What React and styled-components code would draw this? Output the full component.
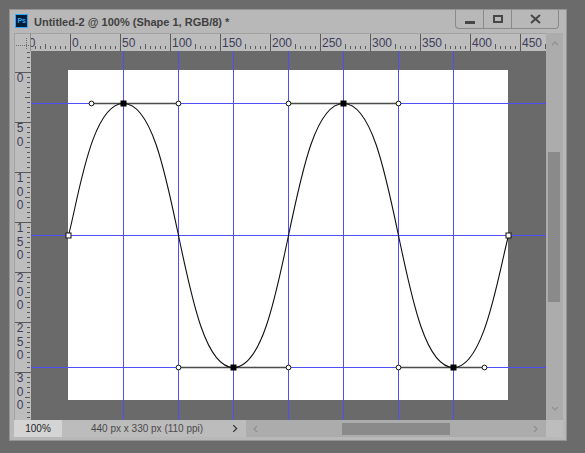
import React from 'react';
import styled, { createGlobalStyle } from 'styled-components';

const GlobalStyle = createGlobalStyle`
  html, body {
    margin: 0;
    padding: 0;
    background: #6b6b6b;
  }
  body {
    width: 585px;
    height: 453px;
    overflow: hidden;
    font-family: "Liberation Sans", Arial, sans-serif;
  }
`;

const GUIDE = '#4f4ff8';
const RULER_INK = '#5a5a5a';
const RULER_TEXT = '#3e3e5c';

// guides, in document px
const GUIDE_X = [55, 110, 165, 220, 275, 330, 385];
const GUIDE_Y = [33, 165, 297];

const CURVE =
  'M0 165 C10 127 23 33 55 33 C110 33 110 297 165 297 C220 297 220 33 275 33 C330 33 330 297 385 297 C416 297 430 203 440 165';

const ANCHORS = [
  { x: 55, y: 33, from: 23, to: 110 },
  { x: 165, y: 297, from: 110, to: 220 },
  { x: 275, y: 33, from: 220, to: 330 },
  { x: 385, y: 297, from: 330, to: 416 },
];

// horizontal ruler: zero sits 39px into the strip
const H_ZERO = 39;
const hTicks = [];
for (let m = -7; H_ZERO + m * 5 < 515; m++) {
  const base = Math.floor(m / 10) * 10;
  const offset = (m - base) * 5;
  const labelW = base >= 0 ? String(base * 5).length * 6.7 + 3 : 0;
  const kind = m % 10 === 0 ? 'major' : Math.abs(m % 10) === 5 ? 'mid' : 'minor';
  if (kind !== 'major' && offset < labelW) continue;
  hTicks.push({ x: H_ZERO + m * 5, kind });
}
const hLabels = [{ x: -9, text: '50' }];
for (let k = 0; k <= 9; k++) hLabels.push({ x: H_ZERO + k * 50 + 2, text: String(k * 50) });

// vertical ruler: zero sits 21px into the strip
const V_ZERO = 21;
const vTicks = [];
for (let m = -4; V_ZERO + m * 5 < 369; m++) {
  const kind = m % 10 === 0 ? 'major' : Math.abs(m % 10) === 5 ? 'mid' : 'minor';
  vTicks.push({ y: V_ZERO + m * 5, kind });
}
const vLabels = [0, 50, 100, 150, 200, 250, 300];

const Page = styled.div`
  padding: 9px 0 0 9px;
`;

const Window = styled.div`
  box-sizing: border-box;
  width: 558px;
  height: 432px;
  display: flex;
  flex-direction: column;
  padding: 0 3px 3px 4px;
  background: #b8b8b8;
  border: 1px solid #949494;
`;

const TitleBar = styled.div`
  height: 23px;
  flex-shrink: 0;
  display: flex;
  align-items: flex-start;
`;

const AppIcon = styled.span`
  box-sizing: border-box;
  width: 13px;
  height: 14px;
  margin: 4px 6px 0 1px;
  background: #001e36;
  border: 1px solid #31a8ff;
  color: #31a8ff;
  font: bold 7px/12px "Liberation Sans", Arial, sans-serif;
  text-align: center;
  letter-spacing: -0.3px;
`;

const Title = styled.span`
  margin-top: 6px;
  font-size: 11px;
  line-height: 13px;
  font-weight: 700;
  color: #414141;
  white-space: nowrap;
`;

const WindowButtons = styled.div`
  margin-left: auto;
  margin-right: 4px;
  height: 18px;
  display: flex;
  border: 1px solid #8a8a8a;
  border-top: none;
  border-radius: 0 0 4px 4px;
  overflow: hidden;
`;

const WinButton = styled.div`
  width: ${(p) => p.w}px;
  display: flex;
  align-items: center;
  justify-content: center;
  & + & {
    border-left: 1px solid #8a8a8a;
  }
`;

const MinGlyph = styled.span`
  width: 10px;
  height: 3px;
  margin-top: 6px;
  background: #474747;
`;

const MaxGlyph = styled.span`
  box-sizing: border-box;
  width: 10px;
  height: 8px;
  border: 2px solid #474747;
`;

const Body = styled.div`
  display: grid;
  grid-template-columns: 17px 515px 17px;
  grid-template-rows: 18px 369px 17px;
`;

const RulerCorner = styled.div`
  background: #bdbdbd;
`;

const HRuler = styled.div`
  background: #bdbdbd;
`;

const VRuler = styled.div`
  display: grid;
  overflow: hidden;
  background: #bdbdbd;
  & > * {
    grid-area: 1 / 1;
  }
`;

const VLabels = styled.div`
  display: flex;
  flex-direction: column;
  padding-top: 20px;
`;

const VLabel = styled.span`
  height: 50px;
  flex-shrink: 0;
  width: 9px;
  margin-left: 1px;
  writing-mode: vertical-lr;
  text-orientation: upright;
  font-size: 12px;
  line-height: 9px;
  letter-spacing: -0.4px;
  color: ${RULER_TEXT};
`;

const CanvasArea = styled.div`
  background: #6a6a6a;
  overflow: hidden;
`;

const VScroll = styled.div`
  grid-column: 3;
  grid-row: 1 / span 2;
  display: flex;
  flex-direction: column;
  background: #acacac;
`;

const VArrow = styled.div`
  height: 22px;
  display: flex;
  align-items: center;
  justify-content: center;
`;

const VTrack = styled.div`
  flex: 1;
`;

const VThumb = styled.div`
  margin: 97px 3px 0 2px;
  height: 150px;
  background: #8a8a8a;
`;

const StatusRow = styled.div`
  grid-column: 1 / span 3;
  display: flex;
  font-size: 10px;
  line-height: 17px;
`;

const ZoomField = styled.div`
  width: 48px;
  background: #d4d4d4;
  color: #1f1f1f;
  text-align: center;
`;

const DocInfo = styled.div`
  width: 184px;
  box-sizing: border-box;
  padding: 0 6px 0 29px;
  display: flex;
  align-items: center;
  background: #bcbcbc;
  color: #4a4a4a;
  white-space: nowrap;
`;

const InfoMenu = styled.span`
  margin-left: auto;
  display: flex;
`;

const HScroll = styled.div`
  width: 300px;
  display: flex;
  align-items: center;
  background: #acacac;
`;

const HArrow = styled.div`
  width: 20px;
  height: 17px;
  display: flex;
  align-items: center;
  justify-content: center;
`;

const HTrack = styled.div`
  flex: 1;
  display: flex;
  align-items: center;
`;

const HThumb = styled.div`
  margin-left: 76px;
  width: 108px;
  height: 12px;
  background: #8a8a8a;
`;

const ScrollCorner = styled.div`
  width: 17px;
  background: #bdbdbd;
`;

const Chevron = ({ dir, color = '#8f8f8f', size = 8 }) => {
  const pts = {
    up: '1,5 4,2 7,5',
    down: '1,2 4,5 7,2',
    left: '5,1 2,4 5,7',
    right: '2,1 5,4 2,7',
  }[dir];
  return (
    <svg width={size} height={size} viewBox="0 0 8 8">
      <polyline points={pts} fill="none" stroke={color} strokeWidth="1.2" />
    </svg>
  );
};

const CloseGlyph = () => (
  <svg width="11" height="10" viewBox="0 0 11 10">
    <path d="M1 1 L10 9 M10 1 L1 9" stroke="#474747" strokeWidth="2" />
  </svg>
);

const CornerMarks = () => (
  <svg width="17" height="18">
    <line x1="0" y1="0.5" x2="17" y2="0.5" stroke="#a2a2a2" />
    <line x1="0.5" y1="0" x2="0.5" y2="18" stroke="#a2a2a2" />
    <line x1="16.5" y1="0" x2="16.5" y2="18" stroke="#8c8c8c" />
    <line x1="12.5" y1="5" x2="12.5" y2="17" stroke="#6e6e6e" strokeDasharray="1 1" />
    <line x1="2" y1="12.5" x2="17" y2="12.5" stroke="#6e6e6e" strokeDasharray="1 1" />
  </svg>
);

const HRulerMarks = () => (
  <svg width="515" height="18">
    <line x1="0" y1="0.5" x2="515" y2="0.5" stroke="#a2a2a2" />
    {hTicks.map((t) => (
      <line
        key={t.x}
        x1={t.x + 0.5}
        x2={t.x + 0.5}
        y1={t.kind === 'major' ? 1 : t.kind === 'mid' ? 11 : 13}
        y2={t.kind === 'major' ? 18 : 16}
        stroke={RULER_INK}
      />
    ))}
    {hLabels.map((l) => (
      <text
        key={l.x}
        x={l.x}
        y="14"
        fontSize="12"
        fontFamily='"Liberation Sans", Arial, sans-serif'
        fill={RULER_TEXT}
      >
        {l.text}
      </text>
    ))}
  </svg>
);

const VRulerTicks = () => (
  <svg width="17" height="369">
    <line x1="0.5" y1="0" x2="0.5" y2="369" stroke="#a2a2a2" />
    {vTicks.map((t) => (
      <line
        key={t.y}
        y1={t.y + 0.5}
        y2={t.y + 0.5}
        x1={t.kind === 'major' ? 1 : t.kind === 'mid' ? 11 : 13}
        x2={t.kind === 'major' ? 17 : 16}
        stroke={RULER_INK}
      />
    ))}
  </svg>
);

const Document = () => (
  <svg width="515" height="369">
    <rect x="37" y="19" width="440" height="330" fill="#ffffff" />
    <g transform="translate(37.5 19.5)" shapeRendering="crispEdges">
      {GUIDE_X.map((x) => (
        <line key={x} x1={x} x2={x} y1={-20} y2={350} stroke={GUIDE} />
      ))}
      {GUIDE_Y.map((y) => (
        <line key={y} x1={-38} x2={478} y1={y} y2={y} stroke={GUIDE} />
      ))}
    </g>
    <g transform="translate(37.5 19.5)">
      {ANCHORS.map((a) => (
        <line key={a.x} x1={a.from} x2={a.to} y1={a.y} y2={a.y} stroke="#4a4a4a" strokeWidth="1.4" />
      ))}
      <path d={CURVE} fill="none" stroke="#111111" strokeWidth="1.1" />
      {ANCHORS.map((a) => (
        <g key={a.x}>
          <circle cx={a.from} cy={a.y} r="2.4" fill="#fff" stroke="#111" strokeWidth="1" />
          <circle cx={a.to} cy={a.y} r="2.4" fill="#fff" stroke="#111" strokeWidth="1" />
          <rect x={a.x - 3} y={a.y - 3} width="6" height="6" fill="#000" />
        </g>
      ))}
      <rect x="-2.5" y="162.5" width="5" height="5" fill="#fff" stroke="#111" />
      <rect x="437.5" y="162.5" width="5" height="5" fill="#fff" stroke="#111" />
    </g>
  </svg>
);

export default function App() {
  return (
    <>
      <GlobalStyle />
      <Page>
        <Window>
          <TitleBar>
            <AppIcon>Ps</AppIcon>
            <Title>Untitled-2 @ 100% (Shape 1, RGB/8) *</Title>
            <WindowButtons>
              <WinButton w={27}>
                <MinGlyph />
              </WinButton>
              <WinButton w={27}>
                <MaxGlyph />
              </WinButton>
              <WinButton w={46}>
                <CloseGlyph />
              </WinButton>
            </WindowButtons>
          </TitleBar>

          <Body>
            <RulerCorner>
              <CornerMarks />
            </RulerCorner>
            <HRuler>
              <HRulerMarks />
            </HRuler>
            <VScroll>
              <VArrow>
                <Chevron dir="up" />
              </VArrow>
              <VTrack>
                <VThumb />
              </VTrack>
              <VArrow>
                <Chevron dir="down" />
              </VArrow>
            </VScroll>
            <VRuler>
              <VRulerTicks />
              <VLabels>
                {vLabels.map((v) => (
                  <VLabel key={v}>{v}</VLabel>
                ))}
              </VLabels>
            </VRuler>
            <CanvasArea>
              <Document />
            </CanvasArea>
            <StatusRow>
              <ZoomField>100%</ZoomField>
              <DocInfo>
                440 px x 330 px (110 ppi)
                <InfoMenu>
                  <Chevron dir="right" color="#3a3a3a" size={9} />
                </InfoMenu>
              </DocInfo>
              <HScroll>
                <HArrow>
                  <Chevron dir="left" />
                </HArrow>
                <HTrack>
                  <HThumb />
                </HTrack>
                <HArrow>
                  <Chevron dir="right" />
                </HArrow>
              </HScroll>
              <ScrollCorner />
            </StatusRow>
          </Body>
        </Window>
      </Page>
    </>
  );
}
